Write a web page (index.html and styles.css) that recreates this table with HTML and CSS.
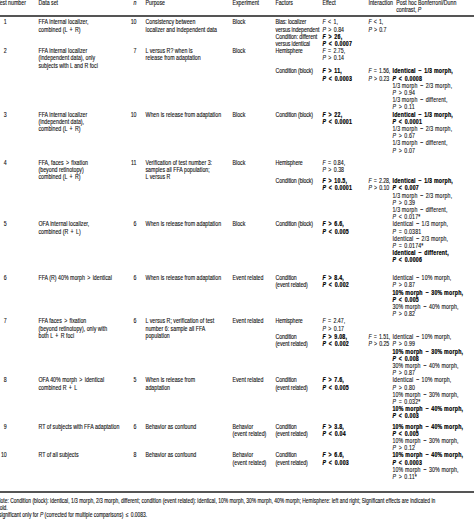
FILE: index.html
```html
<!DOCTYPE html>
<html>
<head>
<meta charset="utf-8">
<link rel="stylesheet" href="styles.css">
</head>
<body>
<div class="sheet">
  <div class="head">
    <div>Test number</div>
    <div>Data set</div>
    <div class="n"><i>n</i></div>
    <div class="purpose">Purpose</div>
    <div>Experiment</div>
    <div>Factors</div>
    <div>Effect</div>
    <div>Interaction</div>
    <div class="ph-head">Post hoc Bonferroni/Dunn<br>contrast, <i>P</i></div>
  </div>

  <div class="row first">
    <div class="num">1</div>
    <div>FFA internal localizer,<br>combined (L <span class="op">+</span> R)</div>
    <div class="n">10</div>
    <div class="purpose">Consistency between<br>localizer and independent data</div>
    <div>Block</div>
    <div class="subs">
      <div class="sr">
        <div>Bias: localizer<br>versus independent<br>Condition: different<br>versus identical</div>
        <div><i>F</i> <span class="op">&lt;</span> 1,<br><i>P</i> <span class="op">&gt;</span> 0.84<br><b><i>F</i> <span class="op">&gt;</span> 26,<br><i>P</i> <span class="op">&lt;</span> 0.0007</b></div>
        <div><i>F</i> <span class="op">&lt;</span> 1,<br><i>P</i> <span class="op">&gt;</span> 0.7</div>
        <div></div>
      </div>
    </div>
  </div>

  <div class="row">
    <div class="num">2</div>
    <div>FFA internal localizer<br>(independent data), only<br>subjects with L and R foci</div>
    <div class="n">7</div>
    <div class="purpose">L versus R? when is<br>release from adaptation</div>
    <div>Block</div>
    <div class="subs">
      <div class="sr">
        <div>Hemisphere</div>
        <div><i>F</i> <span class="op">=</span> 2.75,<br><i>P</i> <span class="op">&gt;</span> 0.14</div>
        <div></div>
        <div></div>
      </div>
      <div class="sr gap-l">
        <div>Condition (block)</div>
        <div><b><i>F</i> <span class="op">&gt;</span> 11,<br><i>P</i> <span class="op">&lt;</span> 0.0003</b></div>
        <div><i>F</i> <span class="op">=</span> 1.56,<br><i>P</i> <span class="op">&gt;</span> 0.23</div>
        <div>
          <p><b>Identical <span class="op">−</span> 1/3 morph,<br><i>P</i> <span class="op">&lt;</span> 0.0008</b></p>
          <p class="gap-p">1/3 morph <span class="op">−</span> 2/3 morph,<br><i>P</i> <span class="op">&gt;</span> 0.94</p>
          <p>1/3 morph <span class="op">−</span> different,<br><i>P</i> <span class="op">&gt;</span> 0.11</p>
        </div>
      </div>
    </div>
  </div>

  <div class="row pb-m">
    <div class="num">3</div>
    <div>FFA internal localizer<br>(independent data),<br>combined (L <span class="op">+</span> R)</div>
    <div class="n">10</div>
    <div class="purpose">When is release from adaptation</div>
    <div>Block</div>
    <div class="subs">
      <div class="sr">
        <div>Condition (block)</div>
        <div><b><i>F</i> <span class="op">&gt;</span> 22,<br><i>P</i> <span class="op">&lt;</span> 0.0001</b></div>
        <div></div>
        <div>
          <p><b>Identical <span class="op">−</span> 1/3 morph,<br><i>P</i> <span class="op">&lt;</span> 0.0001</b></p>
          <p class="gap-q">1/3 morph <span class="op">−</span> 2/3 morph,<br><i>P</i> <span class="op">&gt;</span> 0.67</p>
          <p>1/3 morph <span class="op">−</span> different,<br><i>P</i> <span class="op">&gt;</span> 0.07</p>
        </div>
      </div>
    </div>
  </div>

  <div class="row">
    <div class="num">4</div>
    <div>FFA, faces <span class="op">&gt;</span> fixation<br>(beyond retinotopy)<br>combined (L <span class="op">+</span> R)</div>
    <div class="n">11</div>
    <div class="purpose">Verification of test number 3:<br>samples all FFA population;<br>L versus R</div>
    <div>Block</div>
    <div class="subs">
      <div class="sr">
        <div>Hemisphere</div>
        <div><i>F</i> <span class="op">=</span> 0.84,<br><i>P</i> <span class="op">&gt;</span> 0.38</div>
        <div></div>
        <div></div>
      </div>
      <div class="sr gap-m">
        <div>Condition (block)</div>
        <div><b><i>F</i> <span class="op">&gt;</span> 10.5,<br><i>P</i> <span class="op">&lt;</span> 0.0001</b></div>
        <div><i>F</i> <span class="op">=</span> 2.28,<br><i>P</i> <span class="op">&gt;</span> 0.10</div>
        <div>
          <p><b>Identical <span class="op">−</span> 1/3 morph,<br><i>P</i> <span class="op">&lt;</span> 0.007</b></p>
          <p>1/3 morph <span class="op">−</span> 2/3 morph,<br><i>P</i> <span class="op">&gt;</span> 0.39</p>
          <p>1/3 morph <span class="op">−</span> different,<br><i>P</i> <span class="op">&lt;</span> 0.017*</p>
        </div>
      </div>
    </div>
  </div>

  <div class="row pb-l">
    <div class="num">5</div>
    <div>OFA internal localizer,<br>combined (R <span class="op">+</span> L)</div>
    <div class="n">6</div>
    <div class="purpose">When is release from adaptation</div>
    <div>Block</div>
    <div class="subs">
      <div class="sr">
        <div>Condition (block)</div>
        <div><b><i>F</i> <span class="op">&gt;</span> 6.6,<br><i>P</i> <span class="op">&lt;</span> 0.005</b></div>
        <div></div>
        <div>
          <p>Identical <span class="op">−</span> 1/3 morph,<br><i>P</i> <span class="op">=</span> 0.0381</p>
          <p>Identical <span class="op">−</span> 2/3 morph,<br><i>P</i> <span class="op">=</span> 0.0174*</p>
          <p><b>Identical <span class="op">−</span> different,<br><i>P</i> <span class="op">&lt;</span> 0.0006</b></p>
        </div>
      </div>
    </div>
  </div>

  <div class="row">
    <div class="num">6</div>
    <div>FFA (R) 40% morph <span class="op">&gt;</span> identical</div>
    <div class="n">6</div>
    <div class="purpose">When is release from adaptation</div>
    <div>Event related</div>
    <div class="subs">
      <div class="sr">
        <div>Condition<br>(event related)</div>
        <div><b><i>F</i> <span class="op">&gt;</span> 8.4,<br><i>P</i> <span class="op">&lt;</span> 0.002</b></div>
        <div></div>
        <div>
          <p>Identical <span class="op">−</span> 10% morph,<br><i>P</i> <span class="op">&gt;</span> 0.87</p>
          <p><b>10% morph <span class="op">−</span> 30% morph,<br><i>P</i> <span class="op">&lt;</span> 0.005</b></p>
          <p>30% morph <span class="op">−</span> 40% morph,<br><i>P</i> <span class="op">&gt;</span> 0.82</p>
        </div>
      </div>
    </div>
  </div>

  <div class="row">
    <div class="num">7</div>
    <div>FFA faces <span class="op">&gt;</span> fixation<br>(beyond retinotopy), only with<br>both L <span class="op">+</span> R foci</div>
    <div class="n">6</div>
    <div class="purpose">L versus R; verification of test<br>number 6: sample all FFA<br>population</div>
    <div>Event related</div>
    <div class="subs">
      <div class="sr">
        <div>Hemisphere</div>
        <div><i>F</i> <span class="op">=</span> 2.47,<br><i>P</i> <span class="op">&gt;</span> 0.17</div>
        <div></div>
        <div></div>
      </div>
      <div class="sr gap-s">
        <div>Condition<br>(event related)</div>
        <div><b><i>F</i> <span class="op">&gt;</span> 9.08,<br><i>P</i> <span class="op">&lt;</span> 0.002</b></div>
        <div><i>F</i> <span class="op">=</span> 1.51,<br><i>P</i> <span class="op">&gt;</span> 0.25</div>
        <div>
          <p>Identical <span class="op">−</span> 10% morph,<br><i>P</i> <span class="op">&gt;</span> 0.99</p>
          <p><b>10% morph <span class="op">−</span> 30% morph,<br><i>P</i> <span class="op">&lt;</span> 0.008</b></p>
          <p>30% morph <span class="op">−</span> 40% morph,<br><i>P</i> <span class="op">&gt;</span> 0.87</p>
        </div>
      </div>
    </div>
  </div>

  <div class="row pb-s">
    <div class="num">8</div>
    <div>OFA 40% morph <span class="op">&gt;</span> identical<br>combined R <span class="op">+</span> L</div>
    <div class="n">5</div>
    <div class="purpose">When is release from<br>adaptation</div>
    <div>Event related</div>
    <div class="subs">
      <div class="sr">
        <div>Condition<br>(event related)</div>
        <div><b><i>F</i> <span class="op">&gt;</span> 7.6,<br><i>P</i> <span class="op">&lt;</span> 0.005</b></div>
        <div></div>
        <div>
          <p>Identical <span class="op">−</span> 10% morph,<br><i>P</i> <span class="op">&gt;</span> 0.80</p>
          <p>10% morph <span class="op">−</span> 30% morph,<br><i>P</i> <span class="op">=</span> 0.032*</p>
          <p><b>10% morph <span class="op">−</span> 40% morph,<br><i>P</i> <span class="op">&lt;</span> 0.003</b></p>
        </div>
      </div>
    </div>
  </div>

  <div class="row">
    <div class="num">9</div>
    <div>RT of subjects with FFA adaptation</div>
    <div class="n">6</div>
    <div class="purpose">Behavior as confound</div>
    <div>Behavior<br>(event related)</div>
    <div class="subs">
      <div class="sr">
        <div>Condition<br>(event related)</div>
        <div><b><i>F</i> <span class="op">&gt;</span> 3.8,<br><i>P</i> <span class="op">&lt;</span> 0.04</b></div>
        <div></div>
        <div>
          <p><b>10% morph <span class="op">−</span> 40% morph,<br><i>P</i> <span class="op">&lt;</span> 0.005</b></p>
          <p>10% morph <span class="op">−</span> 30% morph,<br><i>P</i> <span class="op">&gt;</span> 0.12</p>
        </div>
      </div>
    </div>
  </div>

  <div class="row last">
    <div class="num">10</div>
    <div>RT of all subjects</div>
    <div class="n">8</div>
    <div class="purpose">Behavior as confound</div>
    <div>Behavior<br>(event related)</div>
    <div class="subs">
      <div class="sr">
        <div>Condition<br>(event related)</div>
        <div><b><i>F</i> <span class="op">&gt;</span> 6.6,<br><i>P</i> <span class="op">&lt;</span> 0.003</b></div>
        <div></div>
        <div>
          <p><b>10% morph <span class="op">−</span> 40% morph,<br><i>P</i> <span class="op">&lt;</span> 0.0003</b></p>
          <p>10% morph <span class="op">−</span> 30% morph,<br><i>P</i> <span class="op">&gt;</span> 0.11*</p>
        </div>
      </div>
    </div>
  </div>

  <div class="notes">
    <p>Note: Condition (block): identical, 1/3 morph, 2/3 morph, different; condition (event related): identical, 10% morph, 30% morph, 40% morph; Hemisphere: left and right; Significant effects are indicated in<br>bold.</p>
    <p>*significant only for <i>P</i> (corrected for multiple comparisons) <span class="op">≤</span> 0.0083.</p>
  </div>
</div>
</body>
</html>
```

FILE: styles.css
```css
html, body {
  margin: 0;
  padding: 0;
  background: #ffffff;
  overflow: hidden;
  width: 474px;
  height: 526px;
}

.sheet {
  width: 680px;
  margin-left: -3.5px;
  margin-top: -1px;
  transform: scaleX(0.75);
  transform-origin: 0 0;
  font-family: "Liberation Sans", Arial, sans-serif;
  font-size: 7px;
  line-height: 7.2px;
  color: #111111;
  -webkit-text-stroke: 0.12px #111111;
  white-space: nowrap;
}

.sheet p {
  margin: 0;
}

.sheet b {
  letter-spacing: 0.3px;
  -webkit-text-stroke: 0.22px #000000;
  color: #000000;
}

.op {
  margin: 0 1.2px;
}

.head {
  display: grid;
  grid-template-columns: 55.33px 114.67px 16px 128px 57.33px 62.67px 61.33px 32px 1fr;
  padding-bottom: 1.6px;
  border-bottom: 2px solid #555555;
}

.ph-head {
  padding-left: 5px;
}

.row {
  display: grid;
  grid-template-columns: 55.33px 114.67px 16px 128px 57.33px 1fr;
  align-items: start;
}

.row.first {
  padding-top: 1.4px;
}

.row.last {
  padding-bottom: 10.8px;
  border-bottom: 2px solid #555555;
}

.num {
  width: 13.07px;
  text-align: right;
}

.n {
  text-align: right;
}

.purpose {
  padding-left: 12px;
}

.sr {
  display: grid;
  grid-template-columns: 62.67px 61.33px 32px 1fr;
  align-items: start;
}

.sr > :first-child {
  letter-spacing: -0.15px;
}

.sr > :nth-child(3) {
  letter-spacing: -0.15px;
}

.sr > :last-child {
  letter-spacing: 0.2px;
}

.gap-s { margin-top: 1.4px; }
.gap-m { margin-top: 3.8px; }
.gap-l { margin-top: 5.8px; }

.gap-p { margin-top: 4.6px; }
.gap-q { margin-top: 6px; }

.pb-s { padding-bottom: 3px; }
.pb-m { padding-bottom: 5.2px; }
.pb-l { padding-bottom: 10.5px; }

.notes {
  padding-top: 3.5px;
  font-size: 6.6px;
}
```
